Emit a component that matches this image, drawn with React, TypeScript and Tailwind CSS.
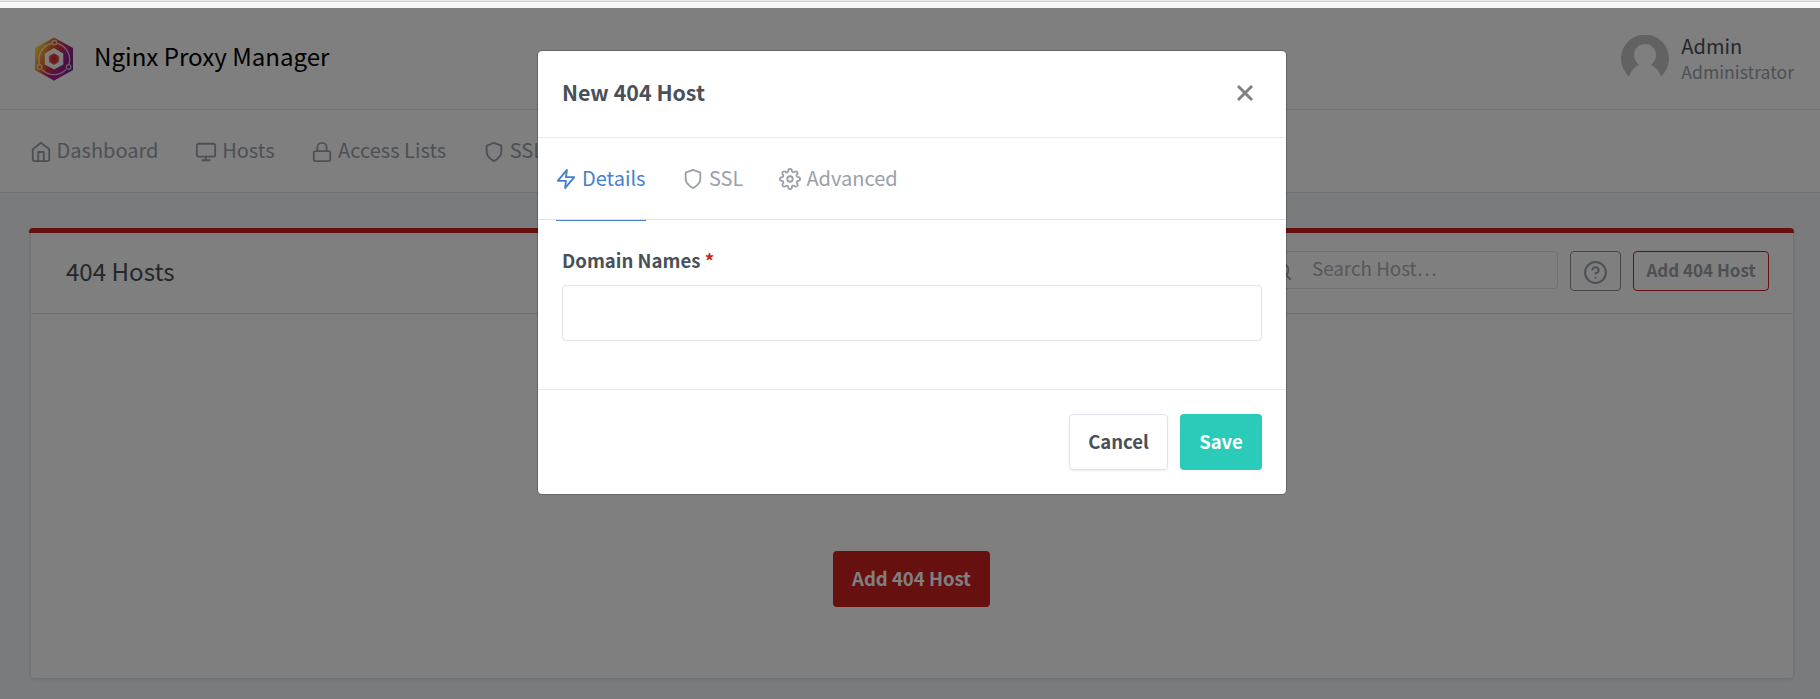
import type { ReactNode } from 'react';
import { FiHome, FiMonitor, FiLock, FiShield, FiSearch, FiHelpCircle, FiZap, FiSettings } from 'react-icons/fi';

function Logo() {
    return (
        <svg viewBox="0 0 40 44" className="w-10 h-11">
            <defs>
                <linearGradient id="hex" x1="0" y1="0.2" x2="1" y2="0.7">
                    <stop offset="0" stopColor="#f6ec3c" />
                    <stop offset="0.22" stopColor="#f39a2c" />
                    <stop offset="0.5" stopColor="#d8342f" />
                    <stop offset="0.72" stopColor="#a81f88" />
                    <stop offset="1" stopColor="#5b2a80" />
                </linearGradient>
                <radialGradient id="core">
                    <stop offset="0" stopColor="#d8262c" />
                    <stop offset="0.6" stopColor="#dd3438" />
                    <stop offset="1" stopColor="#f0847a" />
                </radialGradient>
                <radialGradient id="base" cx="0.5" cy="1" r="0.4">
                    <stop offset="0" stopColor="#b8189a" />
                    <stop offset="1" stopColor="#b8189a" stopOpacity="0" />
                </radialGradient>
            </defs>
            <path d="M20 0.5 39 11v22L20 43.5 1 33V11z" fill="url(#hex)" />
            <path d="M20 0.5 39 11v22L20 43.5 1 33V11z" fill="url(#base)" />
            <g fill="none" stroke="#fff" strokeOpacity="0.7" strokeWidth="1.3">
                <path d="M17.5 6.5A16.500 16.500 0 0 0 5.5 27" />
                <path d="M23.5 6.5A16.500 16.500 0 0 1 35 27" />
                <path d="M8 32.5A16.500 16.500 0 0 0 32 32.5" />
                <circle cx="20.5" cy="5.6" r="2.3" />
                <circle cx="5.6" cy="30" r="2.3" />
                <circle cx="34.6" cy="30" r="2.3" />
            </g>
            <path d="M20 12 28.5 17v10L20 31.500 11.500 27V17z" fill="#fff" stroke="#fff" strokeWidth="1.5" strokeLinejoin="round" />
            <path d="M20 16 25.200 19v6L20 28 14.800 25v-6z" fill="url(#core)" />
        </svg>
    );
}

function NavItem({ icon, children }: { icon: ReactNode; children: ReactNode }) {
    return (
        <a className="flex items-center gap-[5px] text-[#9aa0ac]">
            {icon}
            <span className="-mt-0.5">{children}</span>
        </a>
    );
}

function Header() {
    return (
        <header className="bg-white">
            <div className="h-[102px] border-b border-[#e0e5ec] pl-[34px] pr-[26px] flex items-center justify-between">
                <div className="flex items-center">
                    <Logo />
                    <span className="ml-5 -mt-1 text-[24.1px] text-black">Nginx Proxy Manager</span>
                </div>
                <div className="flex items-center gap-3">
                    <svg viewBox="0 0 48 48" className="w-12 h-12">
                        <path d="M8 41.5A24 24 0 1 1 40 41.5Q37 33 30 30C33 27 35 24 35 20A11 11 0 0 0 13 20C13 24 15 27 18 30Q11 33 8 41.5z" fill="#c4c4c4" />
                    </svg>
                    <div className="leading-[26px]">
                        <div className="text-[20px] text-[#495057]">Admin</div>
                        <div className="text-[17.6px] text-[#9aa0ac]">Administrator</div>
                    </div>
                </div>
            </div>
            <nav className="h-[83px] border-b border-[#dee2eb] pl-[29.5px] flex items-center gap-[36.6px] text-[20.05px]">
                <NavItem icon={<FiHome className="w-[22px] h-[22px] mt-0.5" />}>Dashboard</NavItem>
                <NavItem icon={<FiMonitor className="w-[22px] h-[22px] mt-0.5" />}>Hosts</NavItem>
                <NavItem icon={<FiLock className="w-[22px] h-[22px] mt-0.5" />}>Access Lists</NavItem>
                <NavItem icon={<FiShield className="w-[22px] h-[22px] mt-0.5" />}>SSL Certificates</NavItem>
            </nav>
        </header>
    );
}

function HostsCard() {
    return (
        <section className="mt-[35px] ml-[30px] mr-[26px] h-[451px] rounded bg-white border border-t-0 border-[#dfe3ea] shadow-[0_1px_3px_rgba(0,0,0,0.08)]">
            <div className="-ml-0.5 -mr-px h-[5px] rounded-t bg-[#cd201f]" />
            <div className="h-[81px] border-b border-[#dfe3ea] pl-[35px] pr-6 flex justify-between">
                <h3 className="leading-[76px] text-[24.1px] text-[#495057]">404 Hosts</h3>
                <div className="pt-[18px] flex items-start gap-3">
                    <div className="w-[300px] h-[38px] rounded border border-[#dfe3ea] pl-3 flex items-center gap-[19px] text-[#9aa0ac]">
                        <FiSearch className="w-[22px] h-[22px] mt-0.5" />
                        <span className="-mt-1 text-[18.8px] text-[#adb1b8]">Search Host…</span>
                    </div>
                    <button className="w-[51px] h-10 rounded border border-[#868e96] text-[#9aa0ac] flex items-center justify-center pt-0.5">
                        <FiHelpCircle className="w-[25px] h-[25px]" />
                    </button>
                    <button className="w-[136px] h-10 rounded border border-[#cd201f] text-[#9aa0ac] text-[17px] font-bold pb-1">Add 404 Host</button>
                </div>
            </div>
            <div className="pt-[237px] pr-px flex justify-center">
                <button className="w-[157px] h-14 rounded bg-[#cd201f] text-white text-[18.5px] font-bold pb-0.5">Add 404 Host</button>
            </div>
        </section>
    );
}

function Modal() {
    return (
        <div className="w-[750px] h-[445px] rounded-[5px] bg-white bg-clip-padding border border-black/20 text-[#495057]">
            <div className="h-[87px] border-b border-[#e9ecef] pl-6 pr-[33px] pb-[3px] flex items-center justify-between">
                <h5 className="text-[21.4px] font-bold -mt-px">New 404 Host</h5>
                <svg viewBox="0 0 16 16" className="w-4 h-4 text-[#808080]" stroke="currentColor" strokeWidth="2.9">
                    <path d="M1 1 15 15M15 1 1 15" />
                </svg>
            </div>
            <div className="h-[82px] border-b border-[#dee2e6] pl-[18px] flex text-[20px] gap-9">
                <div className="h-[83px] w-[90px] border-b border-[#467fcf] text-[#467fcf] flex items-center gap-[5px]">
                    <FiZap className="w-[22px] h-[22px] -ml-px" />
                    <span className="-mt-0.5">Details</span>
                </div>
                <NavItem icon={<FiShield className="w-[22px] h-[22px]" />}>SSL</NavItem>
                <NavItem icon={<FiSettings className="w-[22px] h-[22px]" />}>Advanced</NavItem>
            </div>
            <div className="h-[170px] border-b border-[#e9ecef] px-6 pt-[25px]">
                <label className="block h-[31px] leading-[29px] text-[18.6px] font-bold">
                    Domain Names <span className="text-[#cd201f]">*</span>
                </label>
                <div className="mt-[9px] h-14 rounded border border-[#dee2eb]" />
            </div>
            <div className="px-6 pt-6 flex justify-end gap-3 text-[18.5px] font-bold">
                <button className="w-[99px] h-14 rounded border border-[#dee2eb] shadow-[0_1px_2px_rgba(0,0,0,0.08)] pb-0.5">Cancel</button>
                <button className="w-[82px] h-14 rounded bg-[#2bcbba] text-white pb-0.5">Save</button>
            </div>
        </div>
    );
}

export default function App() {
    return (
        <div className="h-[699px] overflow-hidden flex flex-col leading-none font-['Noto_Sans_CJK_SC','Open_Sans',sans-serif]">
            <div className="h-2 shrink-0 bg-[#f7f7f7] border-t border-[#eaeaea]">
                <div className="h-px bg-[#cfcfcf]" />
            </div>
            <div className="relative flex-1 bg-[#f5f7fb]">
                <Header />
                <HostsCard />
                {/* Backdrop */}
                <div className="absolute inset-0 bg-black/50 pt-[42px] pl-[537px]">
                    <Modal />
                </div>
            </div>
        </div>
    );
}
